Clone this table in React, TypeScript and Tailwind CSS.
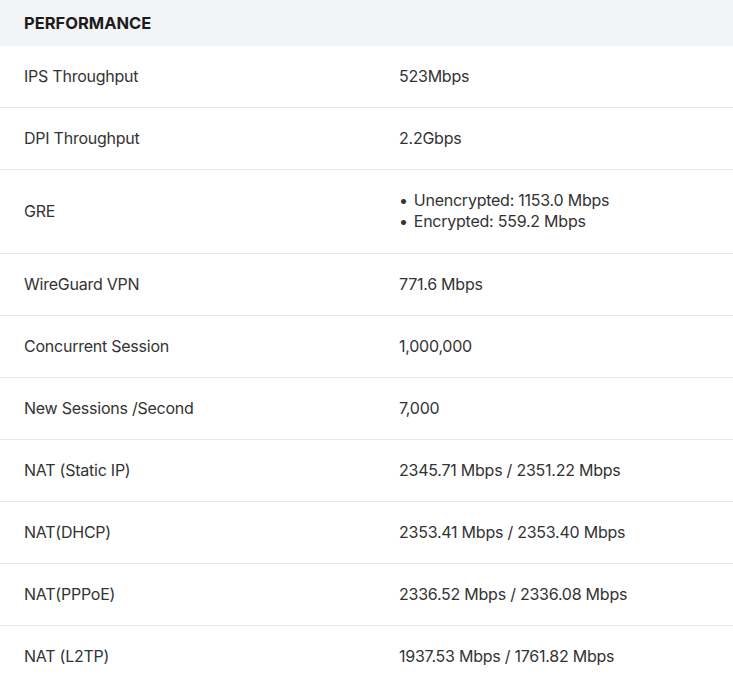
const rows: { label: string; value: string | string[] }[] = [
  { label: "IPS Throughput", value: "523Mbps" },
  { label: "DPI Throughput", value: "2.2Gbps" },
  { label: "GRE", value: ["Unencrypted: 1153.0 Mbps", "Encrypted: 559.2 Mbps"] },
  { label: "WireGuard VPN", value: "771.6 Mbps" },
  { label: "Concurrent Session", value: "1,000,000" },
  { label: "New Sessions /Second", value: "7,000" },
  { label: "NAT (Static IP)", value: "2345.71 Mbps / 2351.22 Mbps" },
  { label: "NAT(DHCP)", value: "2353.41 Mbps / 2353.40 Mbps" },
  { label: "NAT(PPPoE)", value: "2336.52 Mbps / 2336.08 Mbps" },
  { label: "NAT (L2TP)", value: "1937.53 Mbps / 1761.82 Mbps" },
];

export default function App() {
  return (
    <div className="w-[733px] bg-white text-[#333] font-['Inter',sans-serif] text-[16px] tracking-[-0.015em]">
      <div className="bg-[#f3f4f6] px-6 py-3 leading-[22px] text-[16.5px] tracking-normal font-bold text-[#1c1c1c]">PERFORMANCE</div>
      {rows.map((row) => (
        <div key={row.label} className="grid grid-cols-[375px_1fr] items-center border-b border-[#e8e8e8] px-6 py-5 leading-[21px]">
          <div>{row.label}</div>
          <div>
            {Array.isArray(row.value) ? (
              <div className="pb-px">
                {row.value.map((v) => (
                  <div key={v}>
                    <span className="mr-1.5">•</span>
                    {v}
                  </div>
                ))}
              </div>
            ) : (
              row.value
            )}
          </div>
        </div>
      ))}
    </div>
  );
}
